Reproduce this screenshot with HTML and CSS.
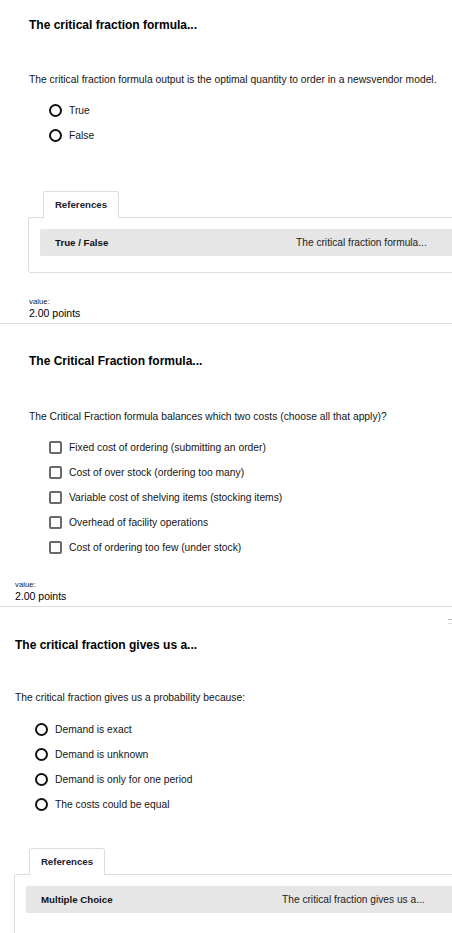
FILE: index.html
```html
<!DOCTYPE html>
<html>
<head>
<meta charset="utf-8">
<link rel="stylesheet" href="styles.css">
</head>
<body>
<section class="q q1">
  <h2 class="title">The critical fraction formula...</h2>
  <p class="prompt">The critical fraction formula output is the optimal quantity to order in a newsvendor model.</p>
  <ul class="opts">
    <li><span class="radio"></span>True</li>
    <li><span class="radio"></span>False</li>
  </ul>
  <div class="refs">
    <div class="tab">References</div>
    <div class="panel">
      <div class="row"><span class="type">True / False</span><span class="name">The critical fraction formula...</span></div>
    </div>
  </div>
  <div class="value"><div class="vlabel">value:</div><div class="pts">2.00 points</div></div>
</section>
<section class="q q2">
  <h2 class="title">The Critical Fraction formula...</h2>
  <p class="prompt">The Critical Fraction formula balances which two costs (choose all that apply)?</p>
  <ul class="opts">
    <li><span class="check"></span>Fixed cost of ordering (submitting an order)</li>
    <li><span class="check"></span>Cost of over stock (ordering too many)</li>
    <li><span class="check"></span>Variable cost of shelving items (stocking items)</li>
    <li><span class="check"></span>Overhead of facility operations</li>
    <li><span class="check"></span>Cost of ordering too few (under stock)</li>
  </ul>
  <div class="value"><div class="vlabel">value:</div><div class="pts">2.00 points</div></div>
</section>
<section class="q q3">
  <span class="edge"></span>
  <h2 class="title">The critical fraction gives us a...</h2>
  <p class="prompt">The critical fraction gives us a probability because:</p>
  <ul class="opts">
    <li><span class="radio"></span>Demand is exact</li>
    <li><span class="radio"></span>Demand is unknown</li>
    <li><span class="radio"></span>Demand is only for one period</li>
    <li><span class="radio"></span>The costs could be equal</li>
  </ul>
  <div class="refs">
    <div class="tab">References</div>
    <div class="panel">
      <div class="row"><span class="type">Multiple Choice</span><span class="name">The critical fraction gives us a...</span></div>
    </div>
  </div>
</section>
</body>
</html>
```
FILE: styles.css
```css
html, body { margin: 0; padding: 0; background: #fff; }
body {
  font-family: "Liberation Sans", Arial, sans-serif;
  color: #111;
  width: 452px;
  overflow: hidden;
}
.q { position: relative; border-bottom: 1px solid #dcdcdc; }
.q1 { padding: 17px 0 4px 29px; }
.q2 { padding: 29px 0 4px 29px; }
.q3 { padding: 30px 0 0 15px; border-bottom: none; }
.title {
  margin: 0;
  font-size: 12px;
  line-height: 16px;
  font-weight: bold;
  color: #000;
}
.prompt {
  margin: 40px 0 0;
  font-size: 10.3px;
  line-height: 14px;
  color: #151515;
}
.q2 .prompt { margin-top: 41px; }
.q3 .prompt { margin-top: 38px; }
.opts {
  list-style: none;
  margin: 11px 0 0 20px;
  padding: 0;
}
.q3 .opts { margin-top: 12px; }
.opts li {
  display: flex;
  align-items: center;
  height: 25px;
  font-size: 10.3px;
  color: #151515;
}
.radio {
  width: 9px; height: 9px;
  border: 2px solid #111;
  border-radius: 50%;
  margin-right: 7px;
  flex: none;
}
.check {
  width: 9px; height: 9px;
  border: 2px solid #6a6a6a;
  border-radius: 2px;
  margin-right: 7px;
  flex: none;
}
.refs {
  display: flex;
  flex-direction: column;
  margin-top: 43px;
  margin-left: -1px;
}
.q3 .refs { margin-top: 31px; }
.tab {
  align-self: flex-start;
  box-sizing: border-box;
  width: 76px;
  height: 27px;
  margin: 0 0 -1px 15px;
  border: 1px solid #dcdcdc;
  border-bottom: none;
  border-radius: 3px 3px 0 0;
  background: #fff;
  font-size: 9.7px;
  font-weight: bold;
  color: #1c2233;
  line-height: 26px;
  text-align: center;
  position: relative;
  z-index: 1;
}
.panel {
  border: 1px solid #dcdcdc;
  border-right: none;
  border-radius: 3px 0 0 3px;
  padding: 11px 0 16px 11px;
}
.q3 .panel { padding-bottom: 30px; }
.row {
  display: grid;
  grid-template-columns: 241px 1fr;
  align-items: center;
  height: 27px;
  background: #e6e6e6;
  border-radius: 2px 0 0 2px;
  padding-left: 15px;
  font-size: 10.2px;
  white-space: nowrap;
}
.type { font-weight: bold; color: #111; font-size: 9.7px; }
.name { color: #222; }
.value { margin-top: 24px; }
.q2 .value { margin-top: 20px; margin-left: -14px; }
.vlabel { font-size: 7.8px; line-height: 10px; color: #222; }
.pts { font-size: 10.5px; line-height: 12px; color: #000; }
.edge {
  position: absolute;
  right: 0; top: 12px;
  width: 4px; height: 3px;
  border-top: 1px solid #bbb;
  border-bottom: 1px solid #ddd;
}
```
